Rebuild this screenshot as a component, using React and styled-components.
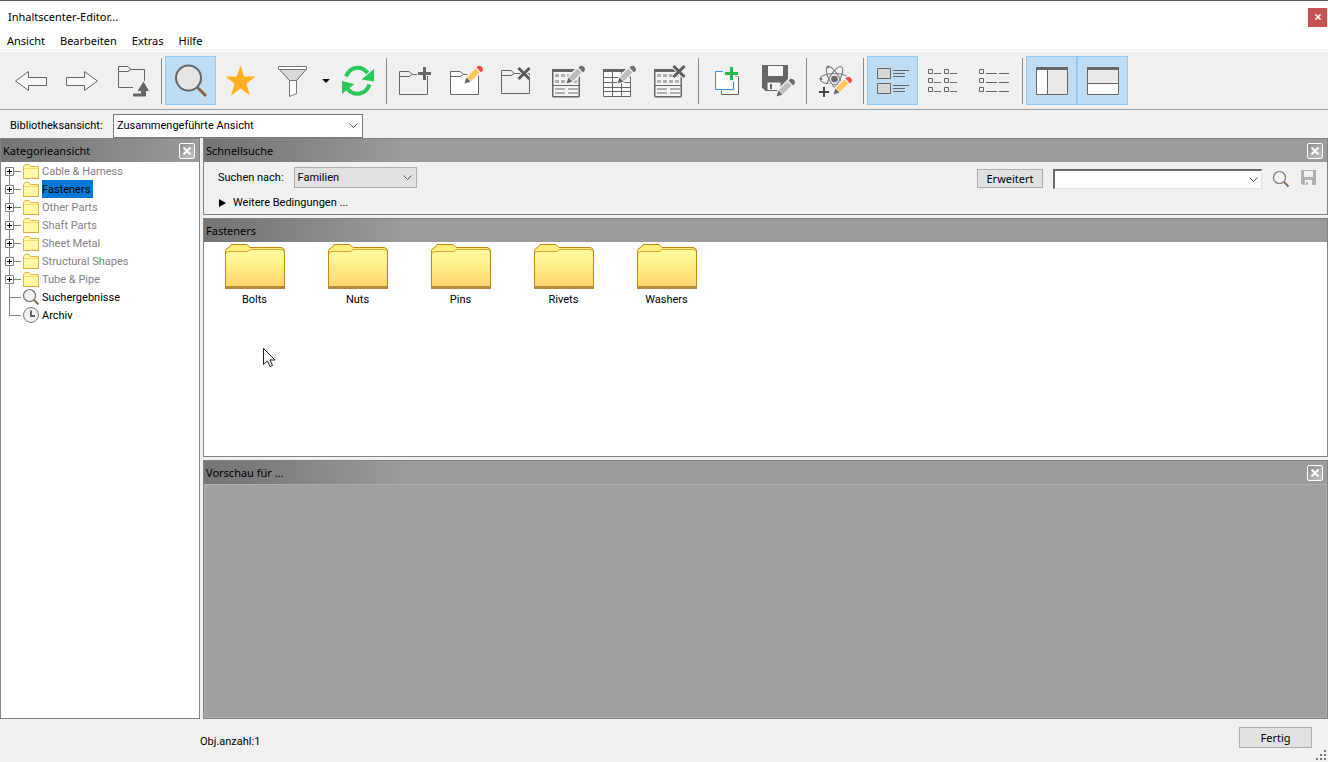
import React, { useState } from "react";
import styled, { createGlobalStyle, css } from "styled-components";

const Global = createGlobalStyle`
  *, *::before, *::after { box-sizing: border-box; }
  body {
    margin: 0;
    background: #f0f0f0;
    color: #000;
    font: 11px/16px Roboto, "Liberation Sans", sans-serif;
  }
  button, input, select { font: inherit; color: inherit; margin: 0; padding: 0; border-radius: 0; }
  svg { display: block; flex: none; }
`;

const uiFont = css`font-family: "Noto Sans", "Open Sans", sans-serif;`;

/* ---------- frame ---------- */
const Window = styled.div`
  min-height: 100vh;
  display: flex;
  flex-direction: column;
  border-top: 1px solid #5c5a5a;
`;
const TitleBar = styled.header`
  ${uiFont}
  display: flex;
  justify-content: space-between;
  align-items: center;
  height: 31px;
  padding: 0 1px 0 8px;
  background: #fff;
`;
const Title = styled.h1`
  margin: 0;
  font-size: 11px;
  font-weight: 400;
`;
const WindowClose = styled.button`
  width: 19px;
  height: 19px;
  margin-top: 1px;
  border: 0;
  background: #c75050;
  display: grid;
  place-items: center;
`;
const MenuBar = styled.nav`
  ${uiFont}
  display: flex;
  gap: 15px;
  height: 17px;
  padding-left: 7px;
  background: #fff;
`;
const MenuItem = styled.button`
  height: 18px;
  border: 0;
  background: none;
  line-height: 18px;
`;

/* ---------- toolbar ---------- */
const Toolbar = styled.div`
  display: flex;
  align-items: center;
  height: 60px;
  margin-top: 1px;
  padding-left: 6px;
  border-top: 2px solid #fbfbfb;
  border-bottom: 1px solid #a0a0a0;
`;
const Tool = styled.button`
  width: 51px;
  height: 49px;
  display: flex;
  border: 0;
  background: ${(p) => (p.$active ? "#c0dcf3" : "transparent")};
  box-shadow: ${(p) => (p.$active ? "inset 0 0 0 1px #90c8f6" : "none")};
`;
const DropTool = styled.button`
  width: 15px;
  height: 49px;
  display: grid;
  place-items: center;
  border: 0;
  background: none;
`;
const Divider = styled.span`
  width: 1px;
  height: 46px;
  margin: 0 3px 0 2px;
  background: #8a8a8a;
`;
const LibraryBar = styled.div`
  display: flex;
  align-items: center;
  justify-content: space-between;
  width: 363px;
  max-width: 100%;
  height: 28px;
  padding: 3px 0 0 10px;
`;

/* ---------- fields ---------- */
const SelectBox = styled.span`
  display: grid;
  align-items: center;
  width: ${(p) => p.$width}px;
  height: ${(p) => p.$height}px;
  border: 1px solid ${(p) => (p.$flat ? "#adadad" : "#7a7a7a")};
  background: ${(p) => (p.$flat ? "#e1e1e1" : "#fff")};
  & > * { grid-area: 1 / 1; }
  & > svg { justify-self: end; margin-right: 3px; pointer-events: none; }
`;
const Select = styled.select`
  appearance: none;
  width: 100%;
  height: 100%;
  padding: 0 18px 0 3px;
  border: 0;
  background: none;
`;
const PushButton = styled.button`
  ${uiFont}
  width: ${(p) => p.$width}px;
  height: ${(p) => p.$height}px;
  border: 1px solid #adadad;
  background: #e1e1e1;
`;
const Combo = styled.span`
  display: flex;
  align-items: center;
  width: 209px;
  height: 20px;
  padding-right: 2px;
  border: solid;
  border-width: 2px 1px 1px 2px;
  border-color: #696969 #e3e3e3 #e3e3e3 #696969;
  background: #fff;
`;
const ComboInput = styled.input`
  flex: 1;
  min-width: 0;
  height: 100%;
  padding-left: 3px;
  border: 0;
  background: none;
`;
const IconButton = styled.button`
  display: grid;
  place-items: center;
  border: 0;
  background: none;
`;

/* ---------- panels ---------- */
const Workspace = styled.main`
  flex: 1;
  display: grid;
  grid-template-columns: 200px 1fr;
  gap: 3px;
`;
const Stack = styled.div`
  display: grid;
  grid-template-rows: 77px 239fr 259fr;
  gap: 3px;
  min-width: 0;
`;
const Panel = styled.section`
  position: relative;
  display: flex;
  flex-direction: column;
  border: 1px solid #828282;
  background: ${(p) => p.$fill || "#fff"};
`;
const PanelHeader = styled.header`
  ${uiFont}
  display: flex;
  justify-content: space-between;
  align-items: center;
  height: 23px;
  padding: 0 4px 0 2px;
  background: linear-gradient(90deg, #757575 0, #7b7b7b 50px, #9b9b9b 200px);
`;
const PanelTitle = styled.h2`
  margin: 0;
  font-size: 11px;
  font-weight: 400;
`;
const PanelClose = styled.button`
  width: 16px;
  height: 16px;
  display: grid;
  place-items: center;
  border: 1px solid #fff;
  border-radius: 2px;
  background: linear-gradient(135deg, #8d8d8d, #c2c2c2);
`;

/* ---------- category tree ---------- */
const Tree = styled.ul`
  margin: 0;
  padding: 0;
  list-style: none;
`;
const TreeRow = styled.li`
  display: flex;
  align-items: center;
  height: 18px;
  padding-left: 3px;
`;
const TreeLabel = styled.button`
  height: 18px;
  margin-left: 2px;
  padding: 1px 3px 0 0;
  border: 0;
  line-height: 17px;
  background: ${(p) => (p.$selected ? "#0078d7" : "none")};
  color: ${(p) => (p.$muted ? "#828282" : "#000")};
`;

/* ---------- quick search ---------- */
const SearchBody = styled.div`
  flex: 1;
  display: flex;
  flex-direction: column;
  gap: 7px;
  padding: 5px 11px 0 14px;
`;
const SearchRow = styled.div`
  display: flex;
  align-items: center;
  justify-content: space-between;
  height: 21px;
`;
const SearchScope = styled.div`
  display: flex;
  align-items: center;
  gap: 10px;
`;
const SearchEntry = styled.div`
  display: flex;
  align-items: center;
  gap: 10px;
  padding-top: 2px;
`;
const Disclosure = styled.button`
  align-self: flex-start;
  display: flex;
  align-items: center;
  gap: 6px;
  border: 0;
  background: none;
`;

/* ---------- family grid ---------- */
const FolderGrid = styled.ul`
  display: flex;
  flex-wrap: wrap;
  column-gap: 2px;
  margin: 0;
  padding: 1px 0 0;
  list-style: none;
`;
const FolderTile = styled.button`
  width: 101px;
  display: flex;
  flex-direction: column;
  align-items: center;
  gap: 1px;
  border: 0;
  background: none;
`;
const Pointer = styled.svg`
  position: absolute;
  left: 59px;
  top: 129px;
  pointer-events: none;
`;
const Preview = styled.div`
  flex: 1;
  border: 1px solid #adadb0;
  background: #a0a0a0;
`;

/* ---------- footer ---------- */
const Footer = styled.footer`
  display: flex;
  justify-content: space-between;
  height: 43px;
  padding: 8px 0 0 200px;
`;
const Status = styled.output`padding-top: 7px;`;
const FooterEnd = styled.div`
  display: flex;
  gap: 4px;
`;
const Grip = styled.span`align-self: flex-end;`;

/* ---------- drawings ---------- */
const G = "#666";
const Art = ({ children }) => (
  <svg width="51" height="49" viewBox="0 0 51 49" fill="none" stroke={G} aria-hidden="true">{children}</svg>
);
const Chevron = () => (
  <svg width="11" height="7" viewBox="0 0 11 7" fill="none" stroke="#555" aria-hidden="true"><path d="M1.5 1.5l4 4 4-4" /></svg>
);
const Pencil = ({ x = 38, y = 13, tip = "#6e6e6e", body = "#bdbdbd" }) => (
  <g transform={`translate(${x} ${y})`} stroke="none">
    <path d="M-15.500 15.500l2-8L-3-3Q0-5.500 3-3 5.500 0 3 3L-7.500 13.500z" fill="#f3f3f3" />
    <path d="M-14.500 14.500l2-6 4 4z" fill={G} />
    <path d="M-12 8L-3.500-.5l4 4L-8 12z" fill={body} />
    <path d="M-2.500-1.500l1.500-1.500Q1-4 3-2t.5 4L2 3.500z" fill={tip} />
  </g>
);
const Cross = ({ x, y }) => (
  <g transform={`translate(${x} ${y})`}>
    <path d="M-5.500-5.500l11 11M5.500-5.500l-11 11" stroke="#f0f0f0" strokeWidth="5" />
    <path d="M-5.500-5.500l11 11M5.500-5.500l-11 11" stroke="#5c5c5c" strokeWidth="3" />
  </g>
);
const FolderLine = ({ fill = "none", y = 15.5 }) => (
  <g transform={`translate(0 ${y})`} fill={fill}>
    <path d="M9.500 0h9.500l3.500 3h15v20h-28z" />
    <path d="M9.500 5h9.500l3.500-2" />
  </g>
);
const TableBase = () => (
  <g>
    <path d="M10 15v26h26V15z" fill="#f4f4f4" />
    <path d="M9.500 14v26.500h27V14M9.500 29.500h27" />
    <path d="M9 14.500h28" strokeWidth="3" />
    <path d="M12 19.500h23M12 25.500h23" stroke="#b0b0b0" strokeWidth="3" strokeDasharray="4 2" />
    <path d="M12 33h10m3 0h10M12 37h10m3 0h10" stroke="#b0b0b0" strokeWidth="2" />
  </g>
);

const art = {
  back: <Art><path d="M9.500 25L22.500 15.500V21.500H40.500V29.500H22.500V34.500z" fill="#f6f6f6" /></Art>,
  forward: <Art><path d="M40.500 25L27.500 15.500V21.500H9.500V29.500H27.500V34.500z" fill="#f6f6f6" /></Art>,
  up: (
    <Art>
      <path d="M25 31.500H10.500V10.500H20l3 3H36.500V25M10.500 15.500H20l3-2" />
      <path d="M35.500 25.500L41 35H38V40.500H25V37.500H33V35H29.500z" fill={G} stroke="none" />
    </Art>
  ),
  search: (
    <Art>
      <path d="M31 30l3 3" strokeWidth="2" />
      <path d="M33.500 32.500l7.500 7.500" stroke="#8a6642" strokeWidth="3" />
      <circle cx="23.500" cy="22" r="12.500" fill="#e4e4e4" strokeWidth="2" />
    </Art>
  ),
  star: <Art><path d="M24.500 9.500l3.800 11H39.500l-9 7.200 3.500 11.800-9.500-7-9.500 7 3.500-11.800-9-7.200H20.700z" fill="#ffb020" stroke="none" /></Art>,
  filter: (
    <Art>
      <path d="M12.500 13.500H39L29.500 24.500H22.500z" fill="#d9d9d9" />
      <path d="M11.500 10.500h28v3h-28z" fill="#fff" stroke="#777" />
      <path d="M22.500 24.500h7V37.500l-7 3z" fill="#fff" stroke="#777" />
    </Art>
  ),
  refresh: (
    <Art>
      <path d="M13 20.500C17 10.500 28 9 34.500 17M36.500 28.500C33 38.500 21.500 41 14.500 33" stroke="#2cc75a" strokeWidth="4" />
      <path d="M41 13V25.500L28.500 23.500zM9 38V25L21.500 28z" fill="#2cc75a" stroke="none" />
    </Art>
  ),
  folderAdd: (
    <Art>
      <FolderLine />
      <path d="M34.500 10v15M27 17.500h15" stroke="#f0f0f0" strokeWidth="5" />
      <path d="M34.500 11v13M28 17.500h13" stroke={G} strokeWidth="3" />
    </Art>
  ),
  folderEdit: <Art><FolderLine fill="#fff" /><Pencil tip="#f04c4c" body="#fdc75c" /></Art>,
  folderDelete: <Art><FolderLine y={14.5} /><Cross x={32} y={17.5} /></Art>,
  tableEdit: <Art><TableBase /><Pencil /></Art>,
  gridEdit: (
    <Art>
      <path d="M9.500 14v26.500h27V14z" fill="#fafafa" />
      <path d="M9 14.500h28" strokeWidth="3" />
      <path d="M18.500 16v24M27.500 16v24M10 21.500h26M10 26.500h26M10 31.500h26M10 35.500h26" />
      <Pencil />
    </Art>
  ),
  tableDelete: <Art><TableBase /><Cross x={34} y={15.5} /></Art>,
  copy: (
    <Art>
      <path d="M19.500 20.500h17v18h-17z" fill="#fff" />
      <path d="M12 14h21v21h-21z" fill="#f0f0f0" stroke="none" />
      <path d="M13.500 15.500h18v18h-18z" fill="#fff" stroke="#3392de" />
      <path d="M29.500 9v17M21 17.500h17" stroke="#f0f0f0" strokeWidth="6" />
      <path d="M29.500 11v13M23 17.500h13" stroke="#22b850" strokeWidth="3" />
    </Art>
  ),
  save: (
    <Art>
      <path d="M9 9h26v26H12.500L9 31.500z" fill={G} stroke="none" />
      <path d="M15 10h15v10H15zM14.500 26.500h13V34h-13z" fill="#f4f4f4" stroke="none" />
      <path d="M18 28v5" strokeWidth="2" />
      <Pencil x={38} y={26} />
    </Art>
  ),
  atom: (
    <Art>
      <g stroke="#777" transform="translate(24.500 23)">
        <ellipse rx="14.500" ry="5.500" />
        <ellipse rx="14" ry="5" transform="rotate(60)" />
        <ellipse rx="14" ry="5" transform="rotate(-60)" />
        <circle r="3" fill={G} />
        <circle cx="-13.500" r="1" fill={G} />
        <circle cx="-6.500" cy="-12" r="1" fill={G} />
      </g>
      <path d="M5 28h17v17H5zM18 32h22v13H18z" fill="#f0f0f0" stroke="none" />
      <Pencil x={38} y={24} tip="#f04c4c" body="#fdc75c" />
      <path d="M9 36h10M14 31v10" stroke="#444" strokeWidth="2" />
    </Art>
  ),
  tiles: (
    <Art>
      <path d="M10.500 12.500h13v10h-13zM10.500 27.500h13v10h-13z" fill="#d6d6d6" />
      <path d="M26 14.500h16M26 17.500h12M26 20.500h12M26 29.500h16M26 32.500h12M26 35.500h12" />
    </Art>
  ),
  icons: (
    <Art>
      {[13.5, 22.5, 31.5].map((y) => (
        <path key={y} d={`M10.500 ${y}h4v4h-4zM26.500 ${y}h4v4h-4zM16 ${y + 4}h7M32 ${y + 4}h7`} />
      ))}
    </Art>
  ),
  list: (
    <Art>
      {[13.5, 22.5, 31.5].map((y) => (
        <path key={y} d={`M10.500 ${y}h4v4h-4zM17 ${y + 4}h11M30 ${y + 4}h10`} />
      ))}
    </Art>
  ),
  paneLeft: (
    <Art>
      <path d="M10.500 12.500h31v26h-31z" fill="#e9e9e9" />
      <path d="M11 14h10v24h-10z" fill="#fff" stroke="none" />
      <path d="M21.500 14v24" />
      <path d="M10 12.500h32" strokeWidth="3" />
    </Art>
  ),
  paneBottom: (
    <Art>
      <path d="M10.500 12.500h31v26h-31z" fill="#e9e9e9" />
      <path d="M11 28h30v10h-30z" fill="#fff" stroke="none" />
      <path d="M11 27.500h30" />
      <path d="M10 12.500h32" strokeWidth="3" />
    </Art>
  ),
};

const SmallSearch = () => (
  <svg width="18" height="18" viewBox="0 0 18 18" fill="none" aria-hidden="true">
    <path d="M12 12l4.500 4.500" stroke="#8a6642" strokeWidth="1.800" />
    <circle cx="7.500" cy="7.500" r="6" fill="#f4f4f4" stroke="#777" strokeWidth="1.200" />
  </svg>
);
const SmallSave = () => (
  <svg width="16" height="18" viewBox="0 0 16 18" aria-hidden="true">
    <path d="M1 0h15v15H3l-2-2z" fill="#b0b0b0" />
    <path d="M4 1h9v6H4zM5 10h7v5H5z" fill="#f2f2f2" />
    <path d="M6 12h2v3H6z" fill="#b0b0b0" />
  </svg>
);
const Clock = () => (
  <svg width="18" height="18" viewBox="0 0 18 18" fill="none" aria-hidden="true">
    <circle cx="9" cy="9" r="7.500" fill="#f2f2f2" stroke="#777" />
    <path d="M9 4.500V10h4" stroke="#666" strokeWidth="2" />
  </svg>
);
const SmallFolder = () => (
  <svg width="18" height="18" viewBox="0 0 18 18" aria-hidden="true">
    <path d="M1.500 16.500v-12L3 2.500h4l1.500 2h8v12z" fill="#fff9a6" stroke="#e0b44c" />
    <path d="M2 6.500h14" stroke="#f3da6b" />
    <path d="M1 16.500h16" stroke="#dba945" />
  </svg>
);
const BigFolder = () => (
  <svg width="62" height="48" viewBox="0 0 62 48" aria-hidden="true">
    <defs>
      <linearGradient id="folderFace" x1="0" y1="0" x2="0" y2="1">
        <stop offset="0" stopColor="#fffaa0" />
        <stop offset="0.400" stopColor="#fff08c" />
        <stop offset="1" stopColor="#ffd36c" />
      </linearGradient>
    </defs>
    <path d="M1.500 44V7.500Q2 5 5 4.500L7 1.500H23L26 4.500H57Q60.500 5 60.500 8V44z" fill="#ffee7e" stroke="#c08a12" />
    <path d="M1.500 44V11Q2 8.500 5 8.500H23Q25 8.500 26 6.500H56Q60.500 6.500 60.500 10V44z" fill="url(#folderFace)" stroke="#d9a62c" />
    <path d="M1.500 8V45M60.500 8V45" stroke="#c08a12" />
    <path d="M1 44.500h60" stroke="#b58a3c" strokeWidth="3" />
  </svg>
);
const branchLines = {
  first: "M5.500 9V18M5.500 9.500H17",
  middle: "M5.500 0V18M5.500 9.500H17",
  last: "M5.500 0V9.500H17",
};
const Branch = ({ expandable, kind = "middle" }) => (
  <svg width="18" height="18" viewBox="0 0 18 18" fill="none" stroke="#828282" aria-hidden="true">
    <path d={branchLines[kind]} />
    {expandable && (
      <>
        <path d="M1.500 5.500h8v8h-8z" fill="#fff" />
        <path d="M3 9.500h5M5.500 7v5" stroke="#000" />
      </>
    )}
  </svg>
);
const XMark = ({ size = 8 }) => (
  <svg width={size} height={size} viewBox="0 0 8 8" stroke="#fff" strokeWidth="2" aria-hidden="true"><path d="M.5.5l7 7M7.500.5l-7 7" /></svg>
);

/* ---------- data ---------- */
const toolGroups = [
  [["back", "Zurück"], ["forward", "Vorwärts"], ["up", "Übergeordnet"]],
  [["search", "Suchen", true], ["star", "Favoriten"], ["filter", "Filter"], ["drop", "Filterliste"], ["refresh", "Aktualisieren"]],
  [["folderAdd", "Neue Kategorie"], ["folderEdit", "Kategorie bearbeiten"], ["folderDelete", "Kategorie löschen"], ["tableEdit", "Familie bearbeiten"], ["gridEdit", "Tabelle bearbeiten"], ["tableDelete", "Familie löschen"]],
  [["copy", "Kopieren"], ["save", "Speichern"]],
  [["atom", "Material"]],
  [["tiles", "Kacheln", true], ["icons", "Symbole"], ["list", "Liste"]],
  [["paneLeft", "Kategorieansicht", true], ["paneBottom", "Vorschau", true]],
];
const categories = ["Cable & Harness", "Fasteners", "Other Parts", "Shaft Parts", "Sheet Metal", "Structural Shapes", "Tube & Pipe"];
const families = ["Bolts", "Nuts", "Pins", "Rivets", "Washers"];

function PanelHead({ title, closable = true }) {
  return (
    <PanelHeader>
      <PanelTitle>{title}</PanelTitle>
      {closable && <PanelClose aria-label={`${title} schließen`}><XMark /></PanelClose>}
    </PanelHeader>
  );
}

export default function App() {
  const [selected, setSelected] = useState("Fasteners");
  return (
    <Window>
      <Global />
      <TitleBar>
        <Title>Inhaltscenter-Editor...</Title>
        <WindowClose aria-label="Fenster schließen"><XMark size={6} /></WindowClose>
      </TitleBar>
      <MenuBar>
        {["Ansicht", "Bearbeiten", "Extras", "Hilfe"].map((m) => <MenuItem key={m}>{m}</MenuItem>)}
      </MenuBar>
      <Toolbar role="toolbar">
        {toolGroups.map((group, i) => (
          <React.Fragment key={group[0][0]}>
            {i > 0 && <Divider />}
            {group.map(([id, label, active]) =>
              id === "drop" ? (
                <DropTool key={id} aria-label={label}>
                  <svg width="8" height="4" viewBox="0 0 8 4" aria-hidden="true"><path d="M0 0h8L4 4z" fill="#111" /></svg>
                </DropTool>
              ) : (
                <Tool key={id} aria-label={label} $active={active}>{art[id]}</Tool>
              )
            )}
          </React.Fragment>
        ))}
      </Toolbar>
      <LibraryBar>
        <label htmlFor="library">Bibliotheksansicht:</label>
        <SelectBox $width={250} $height={24}>
          <Select id="library"><option>Zusammengeführte Ansicht</option></Select>
          <Chevron />
        </SelectBox>
      </LibraryBar>
      <Workspace>
        <Panel>
          <PanelHead title="Kategorieansicht" />
          <Tree>
            {categories.map((name, i) => (
              <TreeRow key={name}>
                <Branch expandable kind={i === 0 ? "first" : "middle"} />
                <SmallFolder />
                <TreeLabel $selected={name === selected} $muted={name !== selected} onClick={() => setSelected(name)}>{name}</TreeLabel>
              </TreeRow>
            ))}
            <TreeRow><Branch /><SmallSearch /><TreeLabel>Suchergebnisse</TreeLabel></TreeRow>
            <TreeRow><Branch kind="last" /><Clock /><TreeLabel>Archiv</TreeLabel></TreeRow>
          </Tree>
        </Panel>
        <Stack>
          <Panel $fill="#f0f0f0">
            <PanelHead title="Schnellsuche" />
            <SearchBody>
              <SearchRow>
                <SearchScope>
                  <label htmlFor="scope">Suchen nach:</label>
                  <SelectBox $width={123} $height={21} $flat>
                    <Select id="scope"><option>Familien</option></Select>
                    <Chevron />
                  </SelectBox>
                </SearchScope>
                <SearchEntry>
                  <PushButton $width={66} $height={19}>Erweitert</PushButton>
                  <Combo>
                    <ComboInput aria-label="Suchbegriff" />
                    <IconButton aria-label="Verlauf"><Chevron /></IconButton>
                  </Combo>
                  <IconButton aria-label="Suchen"><SmallSearch /></IconButton>
                  <IconButton aria-label="Suche speichern"><SmallSave /></IconButton>
                </SearchEntry>
              </SearchRow>
              <Disclosure>
                <svg width="9" height="8" viewBox="0 0 9 8" aria-hidden="true"><path d="M1 0l7 4-7 4z" /></svg>
                Weitere Bedingungen ...
              </Disclosure>
            </SearchBody>
          </Panel>
          <Panel>
            <PanelHead title={selected} closable={false} />
            <FolderGrid>
              {families.map((name) => (
                <li key={name}>
                  <FolderTile><BigFolder />{name}</FolderTile>
                </li>
              ))}
            </FolderGrid>
            <Pointer width="13" height="20" viewBox="0 0 13 20" aria-hidden="true">
              <path d="M.5.5v16l4-3.500 2.500 5.500 2.500-1L7 12h5z" fill="#fff" stroke="#1c1c2c" />
            </Pointer>
          </Panel>
          <Panel $fill="#a0a0a0">
            <PanelHead title="Vorschau für ..." />
            <Preview />
          </Panel>
        </Stack>
      </Workspace>
      <Footer>
        <Status>Obj.anzahl:1</Status>
        <FooterEnd>
          <PushButton $width={73} $height={21}>Fertig</PushButton>
          <Grip>
            <svg width="12" height="12" viewBox="0 0 12 12" fill="#777" aria-hidden="true">
              <path d="M8 0h2v2H8zM8 4h2v2H8zM4 4h2v2H4zM8 8h2v2H8zM4 8h2v2H4zM0 8h2v2H0z" />
            </svg>
          </Grip>
        </FooterEnd>
      </Footer>
    </Window>
  );
}
